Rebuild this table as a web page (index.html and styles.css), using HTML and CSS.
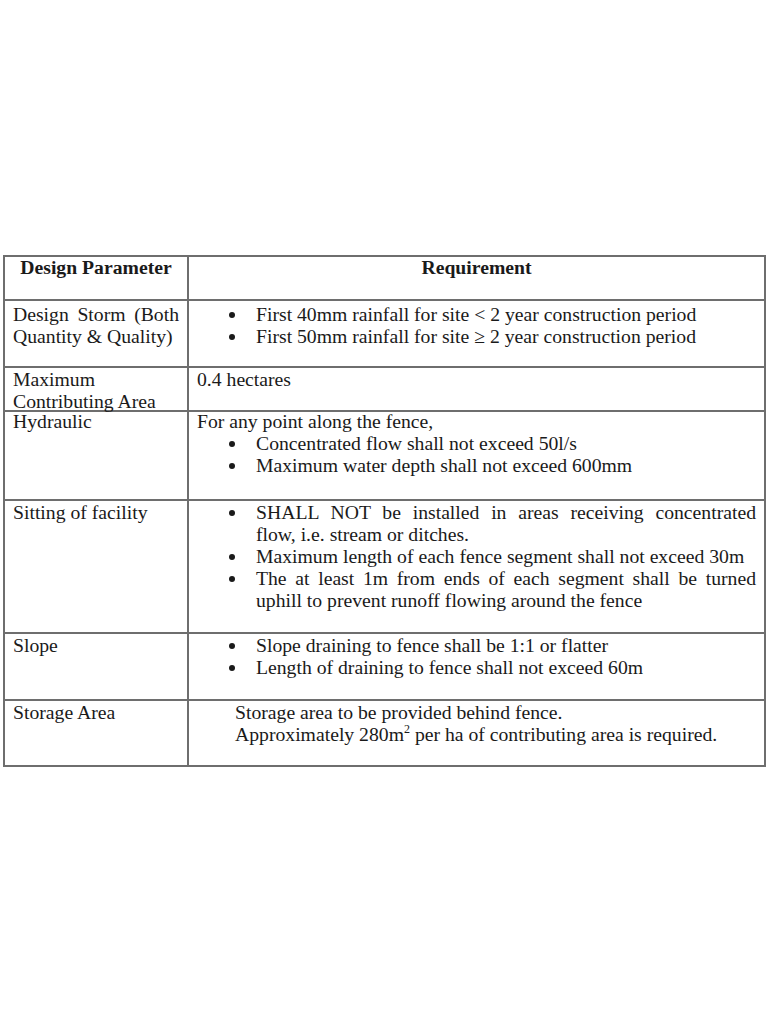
FILE: index.html
```html
<!DOCTYPE html>
<html>
<head>
<meta charset="utf-8">
<link rel="stylesheet" href="styles.css">
</head>
<body>
<table class="spec">
  <colgroup><col class="c1"><col class="c2"></colgroup>
  <tr class="r-head">
    <th>Design Parameter</th>
    <th>Requirement</th>
  </tr>
  <tr class="r-storm">
    <td class="param just">Design Storm (Both Quantity &amp; Quality)</td>
    <td>
      <ul class="bul">
        <li><span class="dot"></span><span>First 40mm rainfall for site &lt; 2 year construction period</span></li>
        <li><span class="dot"></span><span>First 50mm rainfall for site ≥ 2 year construction period</span></li>
      </ul>
    </td>
  </tr>
  <tr class="r-max">
    <td class="param"><div class="fit">Maximum<br>Contributing Area</div></td>
    <td><div class="fit">0.4 hectares</div></td>
  </tr>
  <tr class="r-hyd">
    <td class="param"><div class="lift">Hydraulic</div></td>
    <td>
      <div class="lift">
        <div>For any point along the fence,</div>
        <ul class="bul">
          <li><span class="dot"></span><span>Concentrated flow shall not exceed 50l/s</span></li>
          <li><span class="dot"></span><span>Maximum water depth shall not exceed 600mm</span></li>
        </ul>
      </div>
    </td>
  </tr>
  <tr class="r-sit">
    <td class="param">Sitting of facility</td>
    <td>
      <ul class="bul just">
        <li><span class="dot"></span><span><span class="full">SHALL NOT be installed in areas receiving concentrated</span><span class="rest">flow, i.e. stream or ditches.</span></span></li>
        <li><span class="dot"></span><span>Maximum length of each fence segment shall not exceed 30m</span></li>
        <li><span class="dot"></span><span>The at least 1m from ends of each segment shall be turned uphill to prevent runoff flowing around the fence</span></li>
      </ul>
    </td>
  </tr>
  <tr class="r-slope">
    <td class="param">Slope</td>
    <td>
      <ul class="bul">
        <li><span class="dot"></span><span>Slope draining to fence shall be 1:1 or flatter</span></li>
        <li><span class="dot"></span><span>Length of draining to fence shall not exceed 60m</span></li>
      </ul>
    </td>
  </tr>
  <tr class="r-store">
    <td class="param">Storage Area</td>
    <td class="store">
      <div>Storage area to be provided behind fence.</div>
      <div>Approximately 280m<sup>2</sup> per ha of contributing area is required.</div>
    </td>
  </tr>
</table>
</body>
</html>
```

FILE: styles.css
```css
html, body {
  margin: 0;
  padding: 0;
  background: #ffffff;
}

body {
  font-family: "Liberation Serif", "Times New Roman", serif;
  color: #1a1a1a;
  font-size: 19.7px;
  line-height: 22px;
}

.spec {
  border-collapse: collapse;
  table-layout: fixed;
  width: 761px;
  margin: 255px 0 0 3px;
}

.c1 { width: 184px; }
.c2 { width: 577px; }

.spec th,
.spec td {
  border: 2px solid #6e6e6e;
  vertical-align: top;
  text-align: left;
  padding: 0 8px;
}

.spec th {
  font-weight: bold;
  text-align: center;
  line-height: 20px;
}

.r-head th { height: 42px; }
.r-storm td { height: 63px; padding-top: 2px; }
.r-max td { height: 42px; }
.r-hyd td { height: 87px; }
.r-sit td { height: 131px; }
.r-slope td { height: 65px; }
.r-store td { height: 64px; }

.fit {
  height: 42px;
}

.lift {
  margin-top: -2px;
}

.spec td.just { text-align: justify; }

.bul {
  list-style: none;
  margin: 0;
  padding: 0 0 0 32px;
}

.bul li {
  display: grid;
  grid-template-columns: 27px 1fr;
}

.dot::before {
  content: "";
  display: block;
  width: 6px;
  height: 6px;
  margin-top: 9px;
  border-radius: 50%;
  background: #1a1a1a;
}

.bul.just li span:last-child { text-align: justify; }

.full {
  display: block;
  text-align: justify;
  text-align-last: justify;
}

.rest {
  display: block;
}

.store div { padding-left: 38px; }

.store sup {
  font-size: 12px;
  line-height: 0;
}
```
